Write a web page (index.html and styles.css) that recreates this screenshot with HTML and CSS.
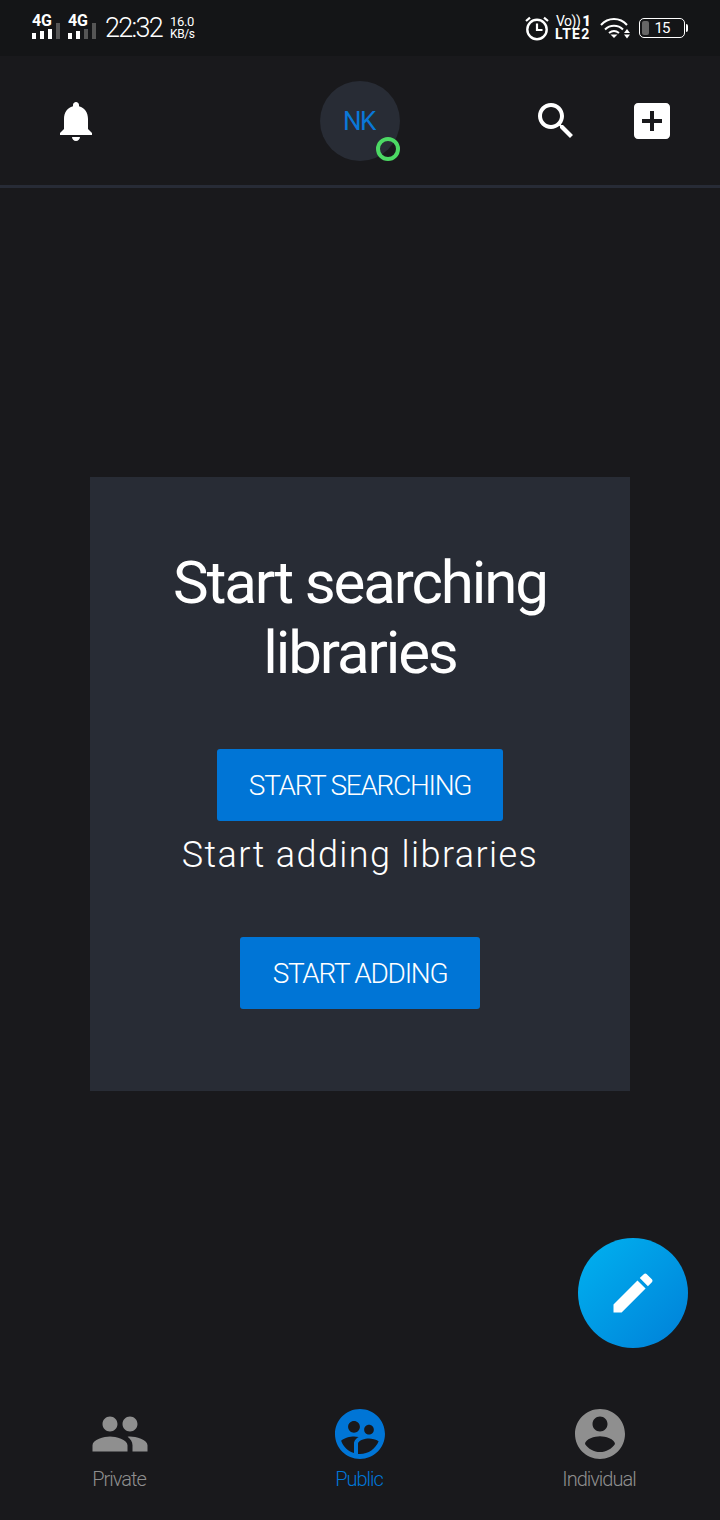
FILE: index.html
```html
<!DOCTYPE html>
<html lang="en">
<head>
  <meta charset="UTF-8">
  <meta name="viewport" content="width=device-width, initial-scale=1.0">
  <title>Libraries</title>
  <link rel="stylesheet" href="styles.css">
</head>
<body>
  <div class="container">
    <!-- Status Bar -->
    <div class="status-bar">
      <div class="status-left">
        <div class="signal">
          <span class="signal-label">4G</span>
          <svg width="28" height="16" viewBox="0 0 28 16">
            <rect x="0" y="10" width="4" height="6" fill="#fff"/>
            <rect x="8" y="8" width="4" height="8" fill="#fff"/>
            <rect x="16" y="6" width="4" height="10" fill="#fff"/>
            <rect x="24" y="0" width="4" height="16" fill="#555"/>
          </svg>
        </div>
        <div class="signal">
          <span class="signal-label">4G</span>
          <svg width="28" height="16" viewBox="0 0 28 16">
            <rect x="0" y="10" width="4" height="6" fill="#fff"/>
            <rect x="8" y="8" width="4" height="8" fill="#fff"/>
            <rect x="16" y="6" width="4" height="10" fill="#555"/>
            <rect x="24" y="0" width="4" height="16" fill="#555"/>
          </svg>
        </div>
        <span class="clock">22:32</span>
        <div class="speed">
          <span>16.0</span>
          <span>KB/s</span>
        </div>
      </div>
      <div class="status-right">
        <svg class="alarm" width="26" height="26" viewBox="0 0 26 26" fill="none" stroke="#fff">
          <circle cx="13" cy="14.5" r="9.7" stroke-width="2.4"/>
          <path d="M13 8.5v6.5h5.5" stroke-width="2.2"/>
          <path d="M2 6l4-3.4M24 6l-4-3.4" stroke-width="2.2"/>
        </svg>
        <div class="volte">
          <div class="volte-top"><span class="vo">Vo))</span><span class="sim">1</span></div>
          <div class="volte-bottom">LTE2</div>
        </div>
        <svg class="wifi" width="30" height="22" viewBox="0 0 30 22" fill="none" stroke="#fff" stroke-width="2">
          <path d="M1 8C8 0 20 0 27 8"/>
          <path d="M5 12.500C10 7.500 18 7.500 23 12.500"/>
          <path d="M9 16C12 13.500 16 13.500 19 16"/>
          <path d="M10.500 17.500h7L14 21z" fill="#fff" stroke="none"/>
          <path d="M27 12l3 4h-6zM27 21.500l3-4h-6z" fill="#fff" stroke="none"/>
        </svg>
        <div class="battery">
          <div class="battery-level"></div>
          <span class="battery-text">15</span>
        </div>
      </div>
    </div>

    <!-- Header -->
    <div class="header">
      <div class="header-left">
        <svg width="48" height="48" viewBox="0 0 24 24" fill="#fff">
          <path d="M12 22c1.100 0 2-.9 2-2h-4c0 1.100.89 2 2 2zm6-6v-5c0-3.070-1.640-5.640-4.500-6.320V4c0-.83-.67-1.500-1.500-1.500s-1.500.67-1.500 1.500v.68C7.630 5.360 6 7.920 6 11v5l-2 2v1h16v-1l-2-2z"/>
        </svg>
      </div>
      <div class="avatar">
        NK
        <span class="online-dot"></span>
      </div>
      <div class="header-right">
        <svg width="48" height="48" viewBox="0 0 24 24" fill="#fff">
          <path d="M15.500 14h-.79l-.28-.27C15.410 12.590 16 11.110 16 9.500 16 5.910 13.090 3 9.500 3S3 5.910 3 9.500 5.910 16 9.500 16c1.610 0 3.090-.59 4.230-1.570l.27.28v.79l5 4.990L20.490 19l-4.990-5zm-6 0C7.010 14 5 11.990 5 9.500S7.010 5 9.500 5 14 7.010 14 9.500 11.990 14 9.500 14z"/>
        </svg>
        <svg width="48" height="48" viewBox="0 0 24 24" fill="#fff">
          <path d="M19 3H5c-1.110 0-2 .9-2 2v14c0 1.100.89 2 2 2h14c1.100 0 2-.9 2-2V5c0-1.100-.9-2-2-2zm-2 10h-4v4h-2v-4H7v-2h4V7h2v4h4v2z"/>
        </svg>
      </div>
    </div>

    <!-- Main -->
    <div class="main">
      <div class="card">
        <h1 class="card-title">Start searching libraries</h1>
        <button class="action-button search-button">START SEARCHING</button>
        <p class="card-text">Start adding libraries</p>
        <button class="action-button add-button">START ADDING</button>
      </div>
    </div>

    <button class="fab">
      <svg width="52" height="52" viewBox="0 0 24 24" fill="#fff">
        <path d="M3 17.250V21h3.750L17.810 9.940l-3.750-3.750L3 17.250zM20.710 7.040c.39-.39.39-1.020 0-1.410l-2.340-2.340c-.39-.39-1.020-.39-1.410 0l-1.830 1.830 3.750 3.750 1.830-1.830z"/>
      </svg>
    </button>

    <!-- Bottom Navigation -->
    <div class="bottom-nav">
      <div class="nav-item">
        <svg width="60" height="60" viewBox="0 0 24 24" fill="currentColor">
          <path d="M16 11c1.660 0 2.990-1.340 2.990-3S17.660 5 16 5c-1.660 0-3 1.340-3 3s1.340 3 3 3zm-8 0c1.660 0 2.990-1.340 2.990-3S9.660 5 8 5C6.340 5 5 6.340 5 8s1.340 3 3 3zm0 2c-2.330 0-7 1.170-7 3.500V19h14v-2.500c0-2.330-4.670-3.500-7-3.500zm8 0c-.29 0-.62.02-.97.05 1.160.84 1.970 1.970 1.970 3.450V19h6v-2.500c0-2.330-4.670-3.500-7-3.500z"/>
        </svg>
        <span class="nav-text">Private</span>
      </div>
      <div class="nav-item active">
        <svg width="60" height="60" viewBox="0 0 24 24" fill="currentColor">
          <path d="M11.990 2c-5.520 0-10 4.480-10 10s4.480 10 10 10 10-4.480 10-10-4.480-10-10-10zm3.610 6.340c1.070 0 1.930.86 1.930 1.930 0 1.070-.86 1.930-1.930 1.930-1.070 0-1.930-.86-1.930-1.930-.01-1.070.86-1.930 1.930-1.930zm-6-1.580c1.300 0 2.360 1.060 2.360 2.360 0 1.300-1.060 2.360-2.360 2.360s-2.360-1.060-2.360-2.360c0-1.310 1.050-2.360 2.360-2.360zm0 9.130v3.750c-2.400-.75-4.300-2.600-5.140-4.960 1.050-1.120 3.670-1.690 5.140-1.690.53 0 1.200.08 1.900.22-1.640.87-1.900 2.020-1.900 2.680zM11.990 20c-.27 0-.53-.01-.79-.04v-4.070c0-1.420 2.940-2.130 4.400-2.130 1.070 0 2.920.39 3.840 1.150-1.170 2.970-4.060 5.090-7.450 5.090z"/>
        </svg>
        <span class="nav-text">Public</span>
      </div>
      <div class="nav-item">
        <svg width="60" height="60" viewBox="0 0 24 24" fill="currentColor">
          <path d="M12 2C6.480 2 2 6.480 2 12s4.480 10 10 10 10-4.480 10-10S17.520 2 12 2zm0 3c1.660 0 3 1.340 3 3s-1.340 3-3 3-3-1.340-3-3 1.340-3 3-3zm0 14.200c-2.500 0-4.710-1.280-6-3.220.03-1.990 4-3.080 6-3.080 1.990 0 5.970 1.090 6 3.080-1.290 1.940-3.500 3.220-6 3.220z"/>
        </svg>
        <span class="nav-text">Individual</span>
      </div>
    </div>
  </div>
</body>
</html>
```

FILE: styles.css
```css
* {
  margin: 0;
  padding: 0;
  box-sizing: border-box;
  font-family: Roboto, 'Liberation Sans', sans-serif;
}

body {
  background-color: #19191c;
  color: #fff;
}

.container {
  position: relative;
  width: 720px;
  height: 1520px;
  display: flex;
  flex-direction: column;
  overflow: hidden;
}

/* status bar */
.status-bar {
  height: 56px;
  flex-shrink: 0;
  display: flex;
  justify-content: space-between;
  align-items: center;
  padding: 0 35px 0 32px;
  background-color: #141517;
}

.status-left,
.status-right {
  display: flex;
  align-items: center;
}

.signal {
  position: relative;
  width: 36px;
  height: 26px;
  display: flex;
  align-items: flex-end;
  margin-top: -4px;
}

.signal-label {
  position: absolute;
  top: 0;
  left: 0;
  font-size: 16px;
  line-height: 16px;
  font-weight: 700;
  letter-spacing: -0.3px;
}

.clock {
  margin-left: 1px;
  font-size: 27px;
  font-weight: 300;
  letter-spacing: -1.7px;
  line-height: 30px;
}

.speed {
  display: flex;
  flex-direction: column;
  margin-left: 8px;
  font-size: 12px;
  line-height: 12px;
  letter-spacing: -0.4px;
}

.speed span:first-child {
  font-size: 13px;
}

.volte {
  margin-left: 5px;
  width: 36px;
  font-weight: 700;
}

.volte-top {
  display: flex;
  justify-content: space-between;
  align-items: center;
  height: 13px;
  padding-left: 1px;
  line-height: 13px;
}

.vo {
  font-size: 14px;
  font-weight: 400;
  letter-spacing: -0.5px;
}

.sim {
  font-size: 15px;
  font-weight: 900;
}

.volte-bottom {
  font-size: 14px;
  line-height: 13px;
  letter-spacing: 1.2px;
  white-space: nowrap;
}

.wifi {
  margin-left: 9px;
}

.battery {
  position: relative;
  width: 46px;
  height: 20px;
  margin-left: 9px;
  display: flex;
  align-items: center;
  justify-content: center;
  border: 1px solid #fff;
  border-radius: 5px;
}

.battery::after {
  content: "";
  position: absolute;
  top: 5px;
  right: -4px;
  width: 2px;
  height: 8px;
  border-radius: 0 2px 2px 0;
  background-color: #fff;
}

.battery-level {
  position: absolute;
  top: 2px;
  bottom: 2px;
  left: 2px;
  width: 7px;
  border-radius: 2px;
  background-color: #666;
}

.battery-text {
  font-size: 15px;
  letter-spacing: -1px;
}

/* header */
.header {
  height: 132px;
  flex-shrink: 0;
  display: grid;
  grid-template-columns: 1fr 80px 1fr;
  align-items: center;
  border-bottom: 3px solid #272b36;
}

.header-left {
  display: flex;
  padding-left: 52px;
}

.header-right {
  display: flex;
  justify-content: flex-end;
  gap: 48px;
  padding-right: 44px;
}

.header svg {
  display: block;
}

.avatar {
  position: relative;
  width: 80px;
  height: 80px;
  padding-right: 2px;
  display: flex;
  align-items: center;
  justify-content: center;
  border-radius: 50%;
  background-color: #282c35;
  color: #0a78d8;
  font-size: 26px;
  letter-spacing: -1.5px;
}

.online-dot {
  position: absolute;
  right: 0;
  bottom: 0;
  width: 24px;
  height: 24px;
  border: 4px solid #4cd964;
  border-radius: 50%;
}

/* main card */
.main {
  flex: 1;
  display: flex;
  align-items: center;
  justify-content: center;
}

.card {
  width: 540px;
  display: flex;
  flex-direction: column;
  align-items: center;
  padding: 71px 70px 82px;
  background-color: #282c35;
  text-align: center;
}

.card-title {
  font-size: 60px;
  line-height: 70px;
  font-weight: 400;
  letter-spacing: -2.1px;
}

.action-button {
  height: 72px;
  padding-top: 1px;
  border: none;
  border-radius: 3px;
  background-color: #0075d6;
  color: #fff;
  font-size: 28px;
  font-weight: 300;
  letter-spacing: -1.3px;
}

.search-button {
  width: 286px;
  margin-top: 61px;
}

.card-text {
  height: 66px;
  padding-top: 1px;
  font-size: 36px;
  line-height: 66px;
  font-weight: 300;
  letter-spacing: 1.4px;
  white-space: nowrap;
}

.add-button {
  width: 240px;
  margin-top: 50px;
}

/* floating button */
.fab {
  position: absolute;
  top: 1238px;
  left: 578px;
  width: 110px;
  height: 110px;
  display: flex;
  align-items: center;
  justify-content: center;
  border: none;
  border-radius: 50%;
  background: linear-gradient(135deg, #00b2f0, #0080d8);
}

/* bottom nav */
.bottom-nav {
  height: 140px;
  flex-shrink: 0;
  display: grid;
  grid-template-columns: repeat(3, 240px);
  padding-top: 24px;
}

.nav-item {
  display: flex;
  flex-direction: column;
  align-items: center;
  color: #8f8f8f;
}

.nav-item.active {
  color: #0075d6;
}

.nav-text {
  margin-top: 1px;
  padding-right: 2px;
  font-size: 20px;
  line-height: 28px;
  font-weight: 300;
  letter-spacing: -1px;
}
```
